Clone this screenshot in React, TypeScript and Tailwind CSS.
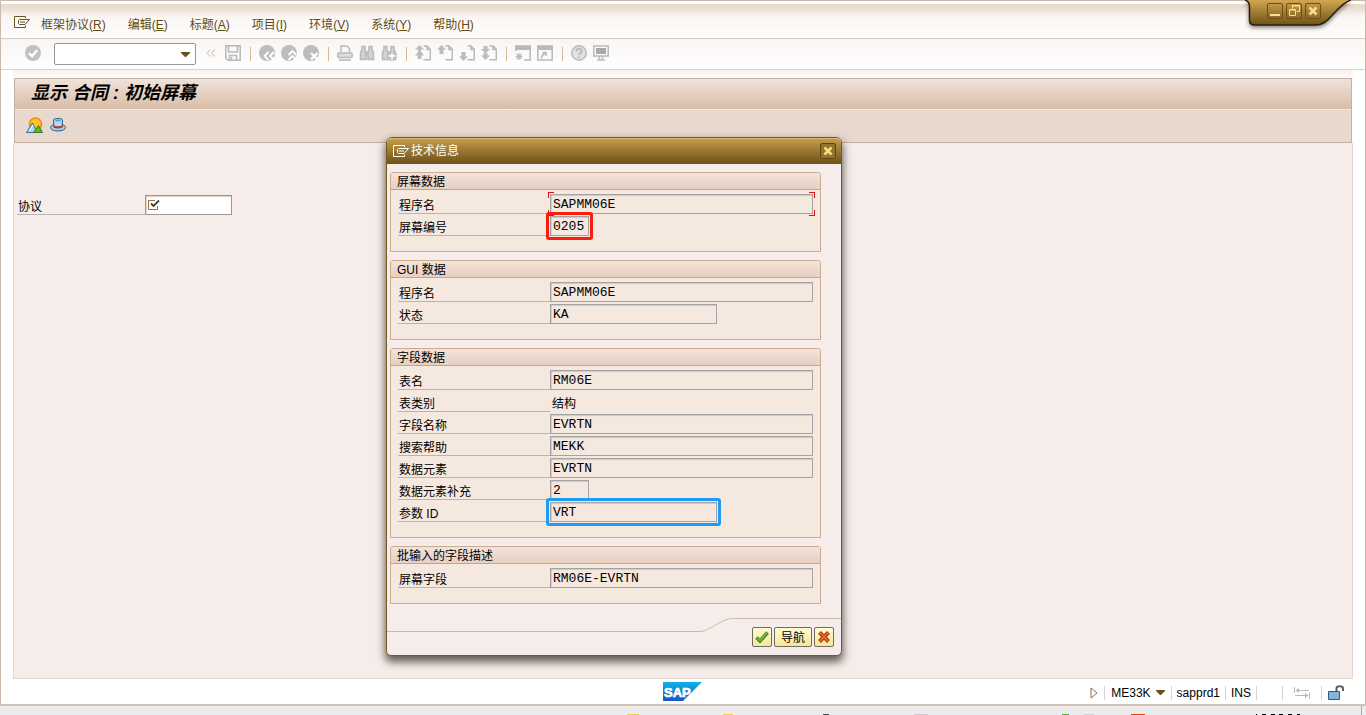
import type { ReactNode } from "react";

const menus = [
  { label: "框架协议", key: "R" },
  { label: "编辑", key: "E" },
  { label: "标题", key: "A" },
  { label: "项目", key: "I" },
  { label: "环境", key: "V" },
  { label: "系统", key: "Y" },
  { label: "帮助", key: "H" },
];

type FieldData = {
  id: string;
  label: string;
  value: string;
  width?: string;
  plain?: boolean;
  focused?: boolean;
  mark?: string;
};

const groups: { title: string; fields: FieldData[] }[] = [
  {
    title: "屏幕数据",
    fields: [
      { id: "screen-program", label: "程序名", value: "SAPMM06E", focused: true },
      { id: "screen-number", label: "屏幕编号", value: "0205", width: "w-[39px]", mark: "border-[#fb1d10]" },
    ],
  },
  {
    title: "GUI 数据",
    fields: [
      { id: "gui-program", label: "程序名", value: "SAPMM06E" },
      { id: "gui-status", label: "状态", value: "KA", width: "w-[167px]" },
    ],
  },
  {
    title: "字段数据",
    fields: [
      { id: "table", label: "表名", value: "RM06E" },
      { id: "table-type", label: "表类别", value: "结构", plain: true },
      { id: "field-name", label: "字段名称", value: "EVRTN" },
      { id: "search-help", label: "搜索帮助", value: "MEKK" },
      { id: "data-element", label: "数据元素", value: "EVRTN" },
      { id: "element-supplement", label: "数据元素补充", value: "2", width: "w-[39px]" },
      { id: "parameter", label: "参数 ID", value: "VRT", width: "w-[167px]", mark: "border-[#1e9bf5]" },
    ],
  },
  {
    title: "批输入的字段描述",
    fields: [{ id: "batch-field", label: "屏幕字段", value: "RM06E-EVRTN" }],
  },
];

function Icon({ children }: { children: ReactNode }) {
  return (
    <svg viewBox="0 0 16 16" className="w-4 h-4" fill="none" stroke="#b9b9b9" strokeWidth="1.5" aria-hidden="true">
      {children}
    </svg>
  );
}

function ToolButton({ label, children }: { label: string; children: ReactNode }) {
  return (
    <button type="button" aria-label={label} className="w-[22px] h-[22px] pb-0.5 flex items-center justify-center shrink-0">
      <Icon>{children}</Icon>
    </button>
  );
}

function Separator() {
  return (
    <span className="w-3 flex justify-center shrink-0">
      <span className="w-px h-[14px] bg-[#d9b898]" />
    </span>
  );
}

function MenuGlyph({ color }: { color: string }) {
  return (
    <svg width="16" height="13" viewBox="0 0 16 13" fill="none" stroke={color} aria-hidden="true">
      <path d="M11.5 2V.5H.5v11h11V9.500" />
      <path d="M15.500 3.500H5.500L4.500 4.500v3l1 1H11l4.500-5M6 6h5" />
    </svg>
  );
}

function DownArrow() {
  return (
    <svg width="9" height="5" viewBox="0 0 9 5" aria-hidden="true">
      <path d="M0 0h9v1L5 5H4L0 1z" fill="#6b5318" />
    </svg>
  );
}

function CloseGlyph() {
  return (
    <svg width="10" height="10" viewBox="0 0 10 10" aria-hidden="true">
      <path d="M1.5 1.5l7 7M8.5 1.5l-7 7" stroke="#ffd98a" strokeWidth="2.5" />
    </svg>
  );
}

function PageShape() {
  return <path d="M8.5 1H12l3.3 3.3v10.4H8.5M12 1v3.5h3.3" />;
}

function Binoculars() {
  return (
    <>
      <path d="M3 1.5h3V5l1 2v7.5H1.5V7L3 5zM10 1.5h3V5l1.5 2v7.5H9V7l1-2z" fill="#d2d2d2" />
      <path d="M7 7.5h2M7 9.5h2" />
    </>
  );
}

function Toolbar() {
  return (
    <div className="h-[31px] flex items-center pl-[21px] bg-linear-to-b from-[#f9f5f2] to-white border-b border-[#d9d1ca]">
      <ToolButton label="回车">
        <circle cx="8" cy="8" r="8" fill="#c1c1c1" stroke="none" />
        <path d="M4 8.2l3 3L12.3 5" stroke="#fff" strokeWidth="2.4" />
      </ToolButton>
      <div className="relative ml-[10px] mr-1">
        <select aria-label="命令" className="block w-[142px] h-[22px] appearance-none bg-white border border-[#9b9690] rounded-[2px] px-1 text-xs" />
        <span className="absolute right-[6px] inset-y-0 flex items-center pointer-events-none">
          <DownArrow />
        </span>
      </div>
      <ToolButton label="收起">
        <path d="M7.5 4.5L4 8l3.5 3.5M12 4.5L8.5 8l3.5 3.5" stroke="#d5d0cc" strokeWidth="1.2" />
      </ToolButton>
      <ToolButton label="保存">
        <path d="M.8.8h14.4v14.4H3L.8 13z" />
        <path d="M3.5 1v6h9V1M4.5 15v-4.5h7V15" />
        <path d="M6.5 12v3" />
      </ToolButton>
      <Separator />
      <ToolButton label="返回">
        <circle cx="8" cy="8" r="8" fill="#bdbdbd" stroke="none" />
        <path d="M9.5 7l-4 4 4 4M15 7l-4 4 4 4" stroke="#fff" strokeWidth="1.8" />
      </ToolButton>
      <ToolButton label="退出">
        <circle cx="8" cy="8" r="8" fill="#bdbdbd" stroke="none" />
        <path d="M7.5 10l4-4 4 4M7.5 15l4-4 4 4" stroke="#fff" strokeWidth="1.8" />
      </ToolButton>
      <ToolButton label="取消">
        <circle cx="8" cy="8" r="8" fill="#bdbdbd" stroke="none" />
        <path d="M8 8l6.5 6.5M14.5 8L8 14.5" stroke="#fff" strokeWidth="2.2" />
      </ToolButton>
      <Separator />
      <ToolButton label="打印">
        <path d="M4 7.5V1h6l2.5 2.5v4" />
        <rect x=".8" y="8" width="14.4" height="4.5" rx="1" fill="#dedede" />
        <path d="M2 15h12" />
      </ToolButton>
      <ToolButton label="查找">
        <Binoculars />
      </ToolButton>
      <ToolButton label="继续查找">
        <Binoculars />
        <path d="M9.5 7.5h3v2H15v3h-2.5V15h-3v-2.5H7v-3h2.5z" fill="#fff" strokeWidth="1.2" />
      </ToolButton>
      <Separator />
      <ToolButton label="第一页">
        <PageShape />
        <path d="M4.5 0L9 4.5H6V7h.5L9 10.500H6.500V14h-4v-3.5H0L3 7V4.500H0z" fill="#bcbcbc" stroke="none" />
      </ToolButton>
      <ToolButton label="上一页">
        <PageShape />
        <path d="M4.5 0L9 4.5H6.5V9h-4V4.5H0z" fill="#bcbcbc" stroke="none" />
      </ToolButton>
      <ToolButton label="下一页">
        <PageShape />
        <path d="M4.5 16L9 11.5H6.5V7h-4v4.5H0z" fill="#bcbcbc" stroke="none" />
      </ToolButton>
      <ToolButton label="最后一页">
        <PageShape />
        <path d="M2.500 1h4v3H9L4.500 8.500 0 4h2.500zM4.500 15L9 10.500H6.500V8h-4v2.500H0z" fill="#bcbcbc" stroke="none" />
      </ToolButton>
      <Separator />
      <ToolButton label="新建会话">
        <path d="M.8 6V1h14.4v14H9" />
        <path d="M1 3h14" strokeWidth="4" />
        <path d="M4 8v7M.5 11.5h7M1.500 9l5 5M6.500 9l-5 5" strokeWidth="1.200" />
      </ToolButton>
      <ToolButton label="快捷方式">
        <path d="M.8 1h14.4v14H.8z" />
        <path d="M1 3h14" strokeWidth="4" />
        <path d="M4.5 13.5c0-3 1-4 3.5-5.500M5.500 7.500H9V11" strokeWidth="1.6" />
      </ToolButton>
      <Separator />
      <ToolButton label="帮助">
        <circle cx="8" cy="8" r="7.2" fill="#e3e3e3" />
        <path d="M5.3 6.200C5.300 3 10.700 3 10.700 6c0 2-2.700 2-2.700 4M8 11.500v1.800" strokeWidth="2" />
      </ToolButton>
      <ToolButton label="定制本地布局">
        <rect x=".8" y="1" width="14.4" height="10" />
        <path d="M3 3h10v6H3z" fill="#a9a9a9" stroke="none" />
        <path d="M6.500 11v3M9.500 11v3M4 15h8" />
      </ToolButton>
    </div>
  );
}

function WindowControls() {
  const box = "w-4 h-4 rounded-[2px] border border-[#6e5014] flex items-center justify-center";
  return (
    <div className="absolute top-0 right-[15px] w-[106px] h-[30px]">
      <svg width="106" height="30" viewBox="0 0 106 30" className="absolute inset-0 drop-shadow-[0_2px_2px_rgba(0,0,0,0.5)]" aria-hidden="true">
        <defs>
          <linearGradient id="tab" x1="0" y1="0" x2="0" y2="1">
            <stop offset="0" stopColor="#d0a650" />
            <stop offset="1" stopColor="#6e5218" />
          </linearGradient>
        </defs>
        <path d="M0 0Q4 1 4.5 6v14q0 5 5 5H70c11 0 15-8 22-15 5-5 8-8 14-10z" fill="url(#tab)" />
        <path d="M0 0Q4 1 4.5 6v14q0 5 5 5H70c11 0 15-8 22-15 5-5 8-8 14-10" fill="none" stroke="#2c2008" strokeWidth="1.5" />
      </svg>
      <div className="relative flex gap-[3px] pl-[22px] pt-[3px]">
        <button type="button" aria-label="最小化" className={box}>
          <svg width="12" height="12" viewBox="0 0 12 12"><path d="M1 10h10" stroke="#ffd98a" strokeWidth="2" /></svg>
        </button>
        <button type="button" aria-label="还原" className={box}>
          <svg width="12" height="12" viewBox="0 0 12 12" fill="none" stroke="#ffd98a"><path d="M4.5 3.5v-3h7v6h-3M4.5 1h7M1.5 4.5h6v6h-6zM1.5 5h6" /></svg>
        </button>
        <button type="button" aria-label="关闭" className={box}>
          <CloseGlyph />
        </button>
      </div>
    </div>
  );
}

function Field({ id, label, value, width = "w-[263px]", plain, focused, mark }: FieldData) {
  return (
    <div className="flex h-5">
      <label htmlFor={id} className="w-38 pl-px border-b border-[#b9b4b1] flex items-end leading-[14px]">
        {label}
      </label>
      {plain ? (
        <output id={id} className="pl-0.5 flex items-end leading-4">{value}</output>
      ) : (
        <div className={`relative ${width}`}>
          <input
            id={id}
            readOnly
            value={value}
            className="block w-full h-5 px-0.5 bg-[#f4e8df] border border-[#a3a3a5] shadow-[inset_1px_1px_1px_#cfc8c4] font-['Liberation_Mono',monospace] text-[13px] outline-none"
          />
          {focused && (
            <span className="absolute -inset-0.5 pointer-events-none">
              <span className="absolute left-0 top-0 size-1.5 border-l border-t border-[#e01010]" />
              <span className="absolute right-0 top-0 size-1.5 border-r border-t border-[#e01010]" />
              <span className="absolute left-0 bottom-0 size-1.5 border-l border-b border-[#e01010]" />
              <span className="absolute right-0 bottom-0 size-1.5 border-r border-b border-[#e01010]" />
            </span>
          )}
          {mark && <span className={`absolute -inset-1 border-3 rounded-[3px] pointer-events-none ${mark}`} />}
        </div>
      )}
    </div>
  );
}

function TechnicalInfoDialog() {
  const button = "h-5 rounded-[2px] border border-[#6f6b66] bg-linear-to-b from-[#fffbd8] to-[#f7e793] flex items-center justify-center";
  return (
    <div
      role="dialog"
      aria-labelledby="dialog-title"
      className="absolute left-[386px] top-[137px] w-[456px] bg-[#f6edea] border border-[#77591c] rounded-t-[6px] rounded-b-[5px] shadow-[0_5px_9px_1px_rgba(50,42,36,0.75)]"
    >
      <div className="h-[26px] flex items-start pt-1 pl-[6px] pr-[5px] gap-0.5 rounded-t-[5px] bg-linear-to-b from-[#c49d49] to-[#6d5119] border-t border-[#d8b872] text-white">
        <span className="pt-0.5">
          <MenuGlyph color="#fff" />
        </span>
        <h2 id="dialog-title" className="flex-1 leading-4">技术信息</h2>
        <button type="button" aria-label="关闭" className="w-4 h-4 rounded-[2px] border border-[#5f4511] bg-[#96732d] flex items-center justify-center">
          <CloseGlyph />
        </button>
      </div>

      <div className="flex flex-col gap-2 pt-2 pl-[3px] pr-5">
        {groups.map((group) => (
          <section key={group.title} className="border border-[#cbac93] rounded-t-[3px] bg-[#f4e8df]">
            <h3 className="h-[17px] pl-[6px] leading-[18px] border-b border-[#c6a58b] bg-linear-to-b from-[#f2e3d9] to-[#e8cfc0] rounded-t-[2px]">
              {group.title}
            </h3>
            <div className="flex flex-col gap-0.5 pt-1 pb-[15px] pl-[7px]">
              {group.fields.map((field) => (
                <Field key={field.id} {...field} />
              ))}
            </div>
          </section>
        ))}
      </div>

      <div className="flex pt-[14px] h-[51px]">
        <div className="flex-1 h-[14px] border-b border-[#c9bcae]" />
        <svg width="32" height="14" viewBox="0 0 32 14" fill="none" stroke="#c9bcae" aria-hidden="true">
          <path d="M0 13.5C8 13.5 20 .5 32 .5" />
        </svg>
        <div className="w-[108px] border-t border-[#c9bcae] pt-2 pr-[7px] flex items-start justify-end gap-0.5">
          <button type="button" aria-label="继续" className={`${button} w-5`}>
            <svg width="14" height="12" viewBox="0 0 14 12">
              <path d="M1.5 6.5L5 10l7.5-8.5" fill="none" stroke="#3c7d1e" strokeWidth="3.5" />
              <path d="M2 6.5l3 3 7-8" fill="none" stroke="#74b838" strokeWidth="2" />
            </svg>
          </button>
          <button type="button" className={`${button} w-[38px] pt-0.5`}>导航</button>
          <button type="button" aria-label="取消" className={`${button} w-5`}>
            <svg width="12" height="12" viewBox="0 0 12 12">
              <path d="M1.5 1.5l9 9M10.5 1.5l-9 9" stroke="#a93208" strokeWidth="4" />
              <path d="M2 2l8 8M10 2l-8 8" stroke="#e8622a" strokeWidth="2.2" />
            </svg>
          </button>
        </div>
      </div>
    </div>
  );
}

function StatusBar() {
  const line = "w-px h-[14px] bg-[#d9d4d0]";
  return (
    <footer className="h-[25px] grid grid-cols-[1fr_auto_1fr] items-center bg-white">
      <span />
      <svg width="40" height="19" viewBox="0 0 40 19" role="img" aria-label="SAP">
        <defs>
          <linearGradient id="sap" x1="0" y1="0" x2="0" y2="1">
            <stop offset="0" stopColor="#0cb2ec" />
            <stop offset="1" stopColor="#1d55ba" />
          </linearGradient>
        </defs>
        <path d="M0 0h39L20 19H0z" fill="url(#sap)" />
        <text x="1" y="15" fill="#fff" stroke="#fff" strokeWidth=".7" fontFamily="Liberation Sans, sans-serif" fontWeight="700" fontSize="13">SAP</text>
      </svg>
      <div className="flex items-center justify-end pr-[20px] pt-0.5 leading-4">
        <button type="button" aria-label="显示字段" className="mr-[6px]">
          <svg width="8" height="12" viewBox="0 0 8 12"><path d="M1 1v10l6-5z" fill="#fff" stroke="#8d6b4f" /></svg>
        </button>
        <span className={line} />
        <button type="button" className="flex items-center gap-[5px] px-1.5">
          ME33K
          <DownArrow />
        </button>
        <span className={line} />
        <span className="px-[5px]">sapprd1</span>
        <span className={line} />
        <span className="px-[5px]">INS</span>
        <span className={line} />
        <span className="w-[25px]" />
        <span className={line} />
        <svg width="16" height="12" viewBox="0 0 16 12" className="mx-[11px]" fill="none" stroke="#b9b9b9" aria-hidden="true">
          <path d="M.5 0v6M15.5 6v6M2 3.500h13M1 8.500h13" />
          <path d="M5 1v5L1.5 3.500zM11 6v5l3.500-2.500z" fill="#b9b9b9" stroke="none" />
        </svg>
        <span className={line} />
        <svg width="17" height="15" viewBox="0 0 17 15" className="ml-[6px]" aria-hidden="true">
          <path d="M8.5 6V3.500C8.500 .5 15 .5 15 3.500V6" fill="none" stroke="#5d5d5d" strokeWidth="2" />
          <path d="M.5 6.500h11v8H.5z" fill="#82b4dc" stroke="#2a5f8a" />
        </svg>
      </div>
    </footer>
  );
}

function Taskbar() {
  return (
    <div className="relative h-[9px] bg-[#ececec] overflow-hidden">
      <span className="absolute left-[627px] bottom-0 w-3 h-px bg-[#f0cf3c]" />
      <span className="absolute left-[723px] bottom-0 w-[10px] h-px bg-[#f0cf3c]" />
      <span className="absolute left-[823px] bottom-0 w-[6px] h-px bg-[#4b4b4b]" />
      <span className="absolute left-[914px] bottom-0 w-[14px] h-px bg-[#cfccc2]" />
      <span className="absolute left-[1062px] bottom-0 w-[7px] h-px bg-[#57a83a]" />
      <span className="absolute left-[1084px] bottom-0 w-[10px] h-px bg-[#d2d2d2]" />
      <span className="absolute left-[1131px] bottom-0 w-[14px] h-px bg-[#f23c12]" />
      <span className="absolute right-[66px] bottom-0 w-11 flex justify-between">
        <span className="w-px h-px bg-black" />
        <span className="w-1 h-px bg-black" />
        <span className="w-1 h-px bg-black" />
        <span className="w-1 h-px bg-black" />
        <span className="w-1 h-px bg-black" />
        <span className="w-[3px] h-px bg-black" />
      </span>
      <span className="absolute right-[4px] inset-y-0 w-px bg-[#a9a9a9]" />
    </div>
  );
}

export default function App() {
  return (
    <div className="relative min-h-screen flex flex-col bg-[#ececec] text-xs text-black font-['Liberation_Sans','Noto_Sans_CJK_SC',sans-serif]">
      <div className="flex-1 flex flex-col bg-white border border-[#cbb9ad] border-b-2 border-b-[#cfc3b8]">
        {/* Menu bar */}
        <header className="h-[38px] pt-[3px] border-b border-[#d6cac0]">
          <nav className="h-[34px] flex items-center pl-[13px] pt-[7px] bg-linear-to-b from-[#eadbcf] from-10% via-[#f9f5f2] via-35% to-white text-[#5f4a16]">
            <button type="button" aria-label="菜单" className="mr-[11px] pb-1">
              <MenuGlyph color="#6b5520" />
            </button>
            <div className="flex gap-[22px]">
              {menus.map((menu) => (
                <button key={menu.key} type="button">
                  {menu.label}(<u>{menu.key}</u>)
                </button>
              ))}
            </div>
          </nav>
        </header>

        <Toolbar />

        <main className="flex-1 flex flex-col mx-3 pt-2 bg-linear-to-b from-[#f8f2ee] to-white to-[12px]">
          <div className="mx-px border border-[#c5b1a3]">
            <h1 className="h-[31px] pl-4 pb-[3px] flex items-center bg-linear-to-b from-[#f0e2d9] to-[#d9bda7] border-b border-[#f5ebe4] text-lg font-bold italic">
              显示 合同 : 初始屏幕
            </h1>
            <div className="h-8 flex items-center gap-[7px] pl-[11px] pb-[3px] bg-[#e8d8ce]">
              <button type="button" aria-label="概览">
                <svg width="17" height="16" viewBox="0 0 17 16" aria-hidden="true">
                  <circle cx="9.5" cy="7" r="6" fill="#fdc62e" stroke="#ee8c16" strokeWidth="1.6" />
                  <path d="M.5 15.5L6.500 6l4.500 9.500z" fill="#b4d4ea" stroke="#2f6c9a" />
                  <path d="M3.500 14L7 8" stroke="#fff" />
                  <path d="M7.500 15.500l5-7 4 7z" fill="#63b22e" stroke="#2f7d1c" />
                </svg>
              </button>
              <button type="button" aria-label="抬头明细">
                <svg width="16" height="14" viewBox="0 0 16 14" aria-hidden="true">
                  <ellipse cx="8" cy="9.500" rx="7.500" ry="3.500" fill="#a9d0e8" stroke="#1c5f92" />
                  <path d="M4 9L3.500 2c0-2 9-2 9 0L12 9z" fill="#b9dbee" stroke="#1c5f92" />
                  <path d="M3.500 7.500q4.500 2 9 0v2q-4.500 2-9 0z" fill="#d22c1c" />
                  <ellipse cx="8" cy="2.500" rx="3" ry="1" fill="#5d9cc6" />
                </svg>
              </button>
            </div>
          </div>

          <div className="flex-1 bg-[#f6edea] border border-t-0 border-[#e3d8cf] pt-[52px] pl-[3px]">
            <div className="flex h-5">
              <label htmlFor="agreement" className="w-32 pl-px border-b border-[#b9b4b1] flex items-end leading-[14px]">
                协议
              </label>
              <div className="relative">
                <input id="agreement" className="block w-[87px] h-5 pl-5 bg-white border border-[#9c9894] shadow-[inset_1px_1px_1px_#d5d1cd] outline-none" />
                <svg width="12" height="12" viewBox="0 0 12 12" className="absolute left-[3px] top-1 pointer-events-none" fill="none" aria-hidden="true">
                  <path d="M7 1.500H.5v9h9V7" stroke="#a2683a" />
                  <path d="M3 4.500l2.500 2.500L11 1.500" stroke="#3b4030" strokeWidth="1.8" />
                </svg>
              </div>
            </div>
          </div>
        </main>

        <StatusBar />
      </div>

      <Taskbar />
      <WindowControls />
      <TechnicalInfoDialog />
    </div>
  );
}
